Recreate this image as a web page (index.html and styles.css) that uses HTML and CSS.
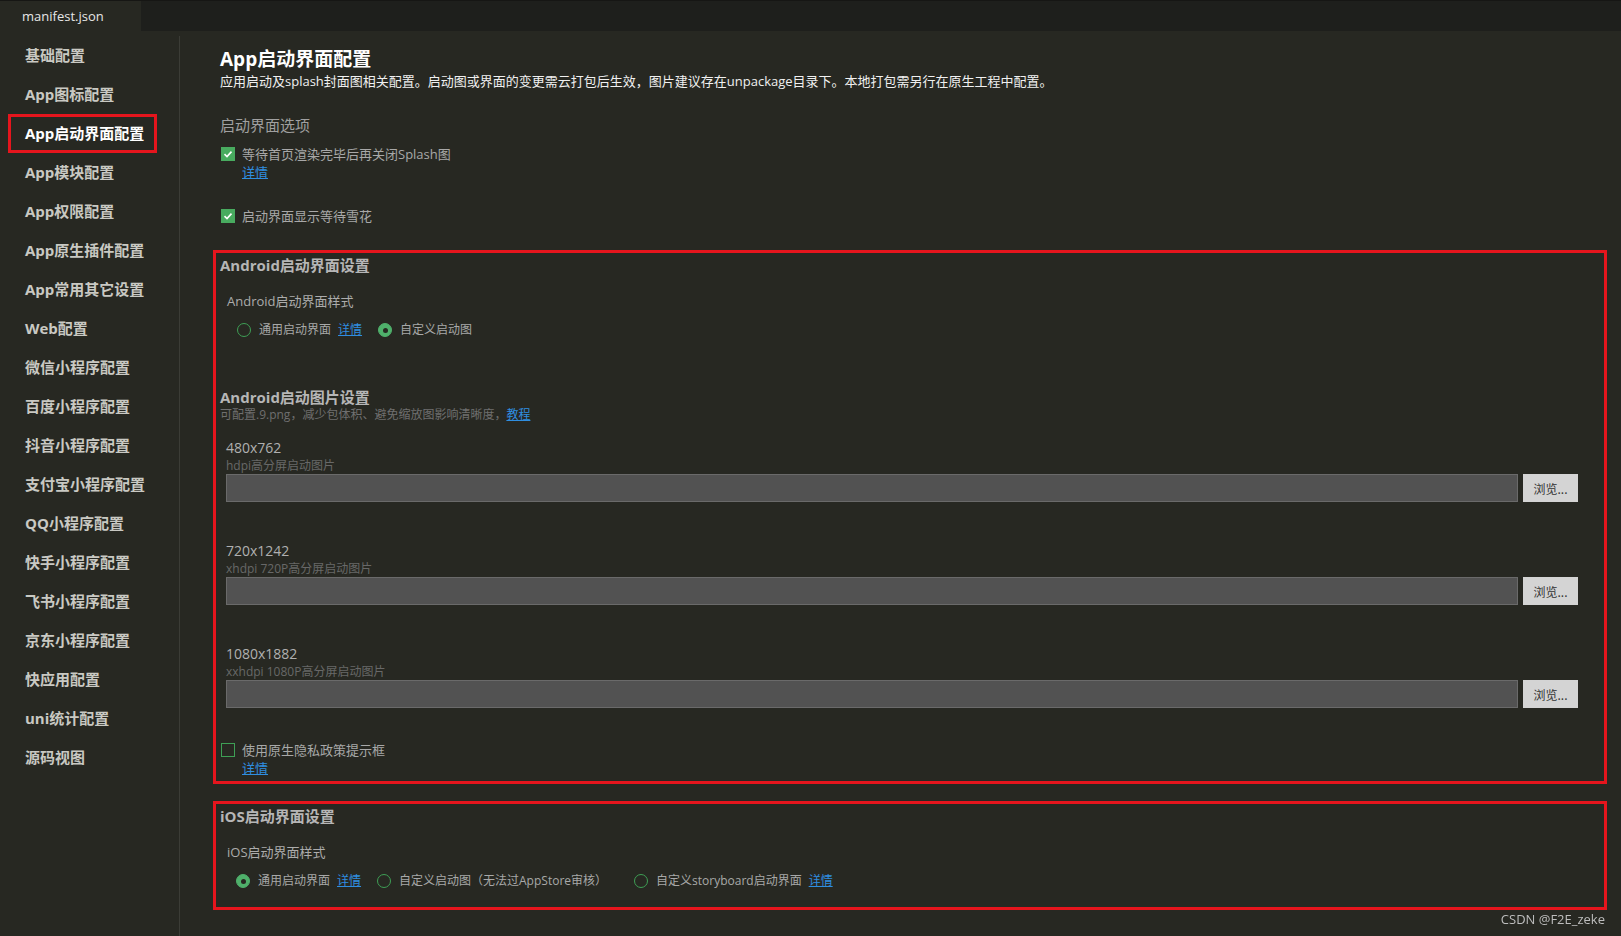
FILE: index.html
```html
<!DOCTYPE html>
<html lang="zh-CN">
<head>
  <meta charset="UTF-8">
  <meta name="viewport" content="width=device-width, initial-scale=1.0">
  <title>manifest.json</title>
  <link rel="stylesheet" href="styles.css">
</head>
<body>
  <div class="tabbar">
    <div class="tab">manifest.json</div>
  </div>

  <div class="layout">
    <nav class="sidebar">
      <a class="nav-item">基础配置</a>
      <a class="nav-item">App图标配置</a>
      <a class="nav-item active">App启动界面配置</a>
      <a class="nav-item">App模块配置</a>
      <a class="nav-item">App权限配置</a>
      <a class="nav-item">App原生插件配置</a>
      <a class="nav-item">App常用其它设置</a>
      <a class="nav-item">Web配置</a>
      <a class="nav-item">微信小程序配置</a>
      <a class="nav-item">百度小程序配置</a>
      <a class="nav-item">抖音小程序配置</a>
      <a class="nav-item">支付宝小程序配置</a>
      <a class="nav-item">QQ小程序配置</a>
      <a class="nav-item">快手小程序配置</a>
      <a class="nav-item">飞书小程序配置</a>
      <a class="nav-item">京东小程序配置</a>
      <a class="nav-item">快应用配置</a>
      <a class="nav-item">uni统计配置</a>
      <a class="nav-item">源码视图</a>
    </nav>

    <main class="content">
      <h1 class="page-title">App启动界面配置</h1>
      <p class="page-desc">应用启动及splash封面图相关配置。启动图或界面的变更需云打包后生效，图片建议存在unpackage目录下。本地打包需另行在原生工程中配置。</p>

      <h3 class="group-title">启动界面选项</h3>
      <div class="check-row">
        <span class="check on"><svg width="14" height="14" viewBox="0 0 14 14"><polyline points="3.5,7.2 6,9.6 10.5,4.6" fill="none" stroke="#fff" stroke-width="1.6"/></svg></span>
        <span>等待首页渲染完毕后再关闭Splash图</span>
      </div>
      <a class="more">详情</a>
      <div class="check-row gap-top">
        <span class="check on"><svg width="14" height="14" viewBox="0 0 14 14"><polyline points="3.5,7.2 6,9.6 10.5,4.6" fill="none" stroke="#fff" stroke-width="1.6"/></svg></span>
        <span>启动界面显示等待雪花</span>
      </div>

      <section class="mark-box android">
        <h3 class="sec-title">Android启动界面设置</h3>
        <div class="sub-label">Android启动界面样式</div>
        <div class="radio-row">
          <span class="radio"></span>
          <span class="radio-text">通用启动界面</span>
          <a class="link">详情</a>
          <span class="radio on next"></span>
          <span class="radio-text">自定义启动图</span>
        </div>

        <h3 class="sec-title img-title">Android启动图片设置</h3>
        <div class="sec-hint">可配置.9.png，减少包体积、避免缩放图影响清晰度，<a class="link">教程</a></div>

        <div class="field first">
          <div class="field-label">480x762</div>
          <div class="field-hint">hdpi高分屏启动图片</div>
          <div class="field-row">
            <input class="path-input" type="text">
            <button class="browse">浏览...</button>
          </div>
        </div>
        <div class="field">
          <div class="field-label">720x1242</div>
          <div class="field-hint">xhdpi 720P高分屏启动图片</div>
          <div class="field-row">
            <input class="path-input" type="text">
            <button class="browse">浏览...</button>
          </div>
        </div>
        <div class="field">
          <div class="field-label">1080x1882</div>
          <div class="field-hint">xxhdpi 1080P高分屏启动图片</div>
          <div class="field-row">
            <input class="path-input" type="text">
            <button class="browse">浏览...</button>
          </div>
        </div>

        <div class="check-row privacy">
          <span class="check"></span>
          <span>使用原生隐私政策提示框</span>
        </div>
        <a class="more">详情</a>
      </section>

      <section class="mark-box ios">
        <h3 class="sec-title">iOS启动界面设置</h3>
        <div class="sub-label">iOS启动界面样式</div>
        <div class="radio-row ios-row">
          <span class="radio on"></span>
          <span class="radio-text">通用启动界面</span>
          <a class="link">详情</a>
          <span class="radio next"></span>
          <span class="radio-text">自定义启动图（无法过AppStore审核）</span>
          <span class="radio far"></span>
          <span class="radio-text">自定义storyboard启动界面</span>
          <a class="link">详情</a>
        </div>
      </section>
    </main>
  </div>

  <div class="watermark">CSDN @F2E_zeke</div>
</body>
</html>
```

FILE: styles.css
```css
body {
  margin: 0;
  background: #272822;
  font-family: "Open Sans", "Noto Sans CJK SC", sans-serif;
  color: #a8a8a8;
  overflow: hidden;
}
a {
  cursor: pointer;
}

/* top tab strip */
.tabbar {
  height: 31px;
  background: #1e1f1c;
  border-top: 1px solid #161614;
  box-sizing: border-box;
}
.tab {
  width: 141px;
  height: 30px;
  line-height: 30px;
  padding-left: 22px;
  box-sizing: border-box;
  background: #272822;
  color: #e6e6e6;
  font-size: 13px;
}

.layout {
  display: flex;
}

/* left menu */
.sidebar {
  width: 179px;
  flex: none;
  margin-top: 5px;
  border-right: 1px solid #3b3c36;
  min-height: 900px;
}
.nav-item {
  display: block;
  width: 149px;
  height: 39px;
  line-height: 39px;
  margin-left: 8px;
  padding-left: 17px;
  box-sizing: border-box;
  font-size: 15px;
  font-weight: 700;
  color: #c9c9c3;
}
.nav-item.active {
  color: #ffffff;
  box-shadow: inset 0 0 0 3px #e5151d;
}

/* main form */
.content {
  flex: 1;
  padding: 0 14px 0 40px;
}
.page-title {
  margin: 15px 0 0;
  font-size: 19px;
  line-height: 26px;
  font-weight: 700;
  color: #ffffff;
}
.page-desc {
  margin: 0;
  font-size: 13px;
  line-height: 18px;
  color: #f0f0f0;
}
.group-title {
  margin: 25px 0 0;
  font-size: 15px;
  line-height: 20px;
  font-weight: 400;
  color: #a0a0a0;
}

.check-row {
  display: flex;
  align-items: center;
  gap: 7px;
  height: 18px;
  line-height: 18px;
  margin: 10px 0 0 1px;
  font-size: 13px;
  color: #a8a8a8;
}
.check-row.gap-top {
  margin-top: 26px;
}
.check {
  width: 14px;
  height: 14px;
  box-sizing: border-box;
  border: 1px solid #3e9f55;
  display: flex;
}
.check.on {
  background: #48ab5f;
  border-color: #48ab5f;
}
.check svg {
  margin: -1px;
}
.more {
  display: block;
  margin-left: 22px;
  width: max-content;
  font-size: 13px;
  line-height: 18px;
  color: #2f8ee0;
  text-decoration: underline;
}
.link {
  color: #2f8ee0;
  text-decoration: underline;
}

/* red annotation boxes */
.mark-box {
  margin: 25px 0 0 -7px;
  padding: 2px 0 4px 4px;
  border: 3px solid #e5151d;
}
.mark-box.ios {
  margin-top: 17px;
  padding-top: 2px;
  padding-bottom: 16px;
}
.sec-title {
  margin: 0;
  font-size: 15px;
  line-height: 20px;
  font-weight: 700;
  color: #b6b6b6;
}
.sec-title.img-title {
  margin-top: 47px;
}
.sec-hint {
  font-size: 12px;
  line-height: 16px;
  color: #6f6f6f;
}
.sub-label {
  margin: 16px 0 0 7px;
  font-size: 13px;
  line-height: 20px;
  color: #acacac;
}

.radio-row {
  display: flex;
  align-items: center;
  height: 20px;
  line-height: 20px;
  margin: 9px 0 0 17px;
  font-size: 12px;
  color: #a8a8a8;
}
.radio-row.ios-row {
  margin-left: 16px;
}
.radio {
  width: 14px;
  height: 14px;
  box-sizing: border-box;
  border: 1.5px solid #3e9f55;
  border-radius: 50%;
  margin-right: 8px;
  flex: none;
}
.radio.on {
  background: #4fb06b;
  border-color: #4fb06b;
  display: flex;
  align-items: center;
  justify-content: center;
}
.radio.on::after {
  content: "";
  width: 5px;
  height: 5px;
  border-radius: 50%;
  background: #272822;
}
.radio-row .link {
  margin-left: 7px;
}
.radio.next {
  margin-left: 16px;
}
.radio.far {
  margin-left: 27px;
}

/* image fields */
.field {
  margin: 40px 26px 0 6px;
}
.field.first {
  margin-top: 16px;
}
.field-label {
  font-size: 14px;
  line-height: 18px;
  color: #b0b0b0;
}
.field-hint {
  margin-top: 1px;
  font-size: 12px;
  line-height: 16px;
  color: #686868;
}
.field-row {
  display: flex;
  gap: 5px;
  height: 28px;
}
.path-input {
  flex: 1;
  margin: 0;
  height: 28px;
  box-sizing: border-box;
  background: #525252;
  border: 1px solid #6a6a6a;
  outline: none;
}
.browse {
  width: 55px;
  height: 28px;
  padding: 0;
  border: none;
  background: #d4d4d4;
  color: #333333;
  font-family: "Noto Sans CJK SC", sans-serif;
  font-size: 12px;
}
.check-row.privacy {
  margin-top: 33px;
}

.watermark {
  position: fixed;
  right: 16px;
  bottom: 8px;
  font-size: 13px;
  line-height: 18px;
  color: #bdbdbd;
}
```
